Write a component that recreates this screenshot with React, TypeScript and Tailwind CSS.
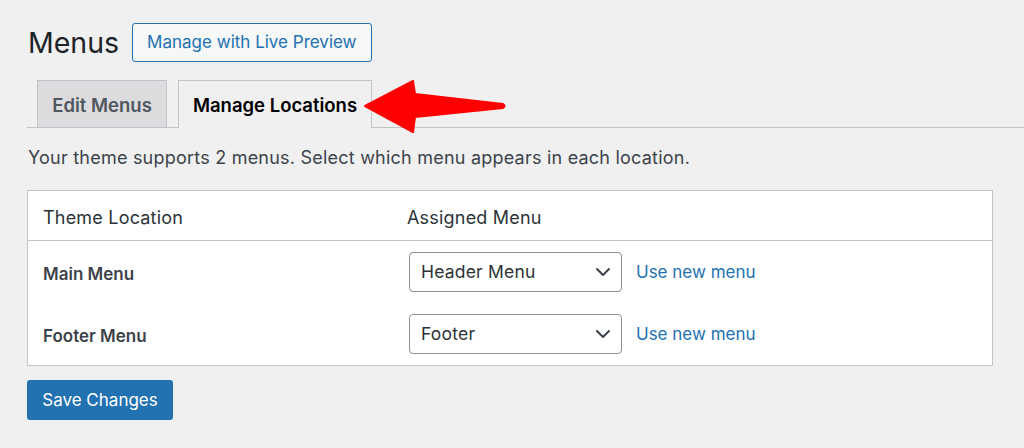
import React from 'react'

const font = { fontFamily: 'Inter, "Liberation Sans", Arial, sans-serif' }

function Chevron() {
  return (
    <svg width="16" height="10" viewBox="0 0 16 10" fill="none" className="text-[#3c434a]">
      <path d="M2 2l6 6 6-6" stroke="currentColor" strokeWidth="2" strokeLinecap="round" strokeLinejoin="round" />
    </svg>
  )
}

function MenuSelect({ value }: { value: string }) {
  return (
    <div className="ml-[2px] flex h-[40px] w-[213px] items-center justify-between rounded-[4px] border border-[#8c8f94] bg-white pl-[11px] pr-[10px] text-[17.5px] tracking-[0.2px] text-[#2c3338]">
      <span>{value}</span>
      <Chevron />
    </div>
  )
}

const rows = [
  { location: 'Main Menu', menu: 'Header Menu' },
  { location: 'Footer Menu', menu: 'Footer' },
]

export default function App() {
  return (
    <div style={font} className="relative h-[448px] w-[1024px] overflow-hidden bg-[#f0f0f1] pl-[27px] pt-[23px]">
      {/* Heading */}
      <div className="flex items-center gap-[13px]">
        <h1 className="pl-[1px] text-[28.5px] leading-[39px] text-[#1d2327]">Menus</h1>
        <button className="h-[39px] rounded-[3px] border border-[#2271b1] bg-[#f6f7f7] px-[14px] text-[17px] text-[#2271b1]">
          Manage with Live Preview
        </button>
      </div>

      {/* Tabs */}
      <div className="mt-[18px] flex items-end gap-[11px] border-b border-[#c3c4c7] pl-[10px]">
        <div className="flex h-[47px] w-[130px] items-center justify-center border border-b-0 border-[#c3c4c7] bg-[#dcdcde] pt-[3px] text-[18.5px] font-semibold text-[#50575e]">
          Edit Menus
        </div>
        <div className="-mb-px flex h-[48px] w-[194px] items-center justify-center border border-b-0 border-[#c3c4c7] bg-[#f0f0f1] pt-[3px] text-[18.5px] font-semibold text-black">
          Manage Locations
        </div>
      </div>

      {/* Arrow pointing at the active tab */}
      <svg className="absolute left-[360px] top-[76px]" width="150" height="60" viewBox="360 76 150 60">
        <path
          d="M365 106 L413 81 L415 94 L503 104 Q506 106 503 108 L415 117 L413 132 Z"
          fill="#ff0000"
          stroke="#ff0000"
          strokeWidth="2"
          strokeLinejoin="round"
        />
      </svg>

      <p className="mt-[18px] pl-[1px] text-[18px] leading-[24px] tracking-[0.22px] text-[#3c434a]">
        Your theme supports 2 menus. Select which menu appears in each location.
      </p>

      {/* Locations table */}
      <div className="mt-[20px] w-[966px] border border-[#c3c4c7] bg-white">
        <div className="grid h-[50px] grid-cols-[364px_1fr] items-center border-b border-[#c3c4c7] px-[15px] pt-[3px] text-[18px] tracking-[0.2px] text-[#2c3338]">
          <span>Theme Location</span>
          <span>Assigned Menu</span>
        </div>
        {rows.map((row) => (
          <div key={row.location} className="grid grid-cols-[364px_1fr] items-center px-[15px] py-[11px]">
            <span className="pt-[5px] text-[17px] font-semibold text-[#3c434a]">{row.location}</span>
            <div className="flex items-center gap-[14px]">
              <MenuSelect value={row.menu} />
              <a className="pt-[2px] text-[17px] text-[#2271b1]">Use new menu</a>
            </div>
          </div>
        ))}
      </div>

      <button className="mt-[14px] h-[40px] w-[146px] rounded-[3px] bg-[#2271b1] pt-[2px] text-[17px] text-white">
        Save Changes
      </button>
    </div>
  )
}
